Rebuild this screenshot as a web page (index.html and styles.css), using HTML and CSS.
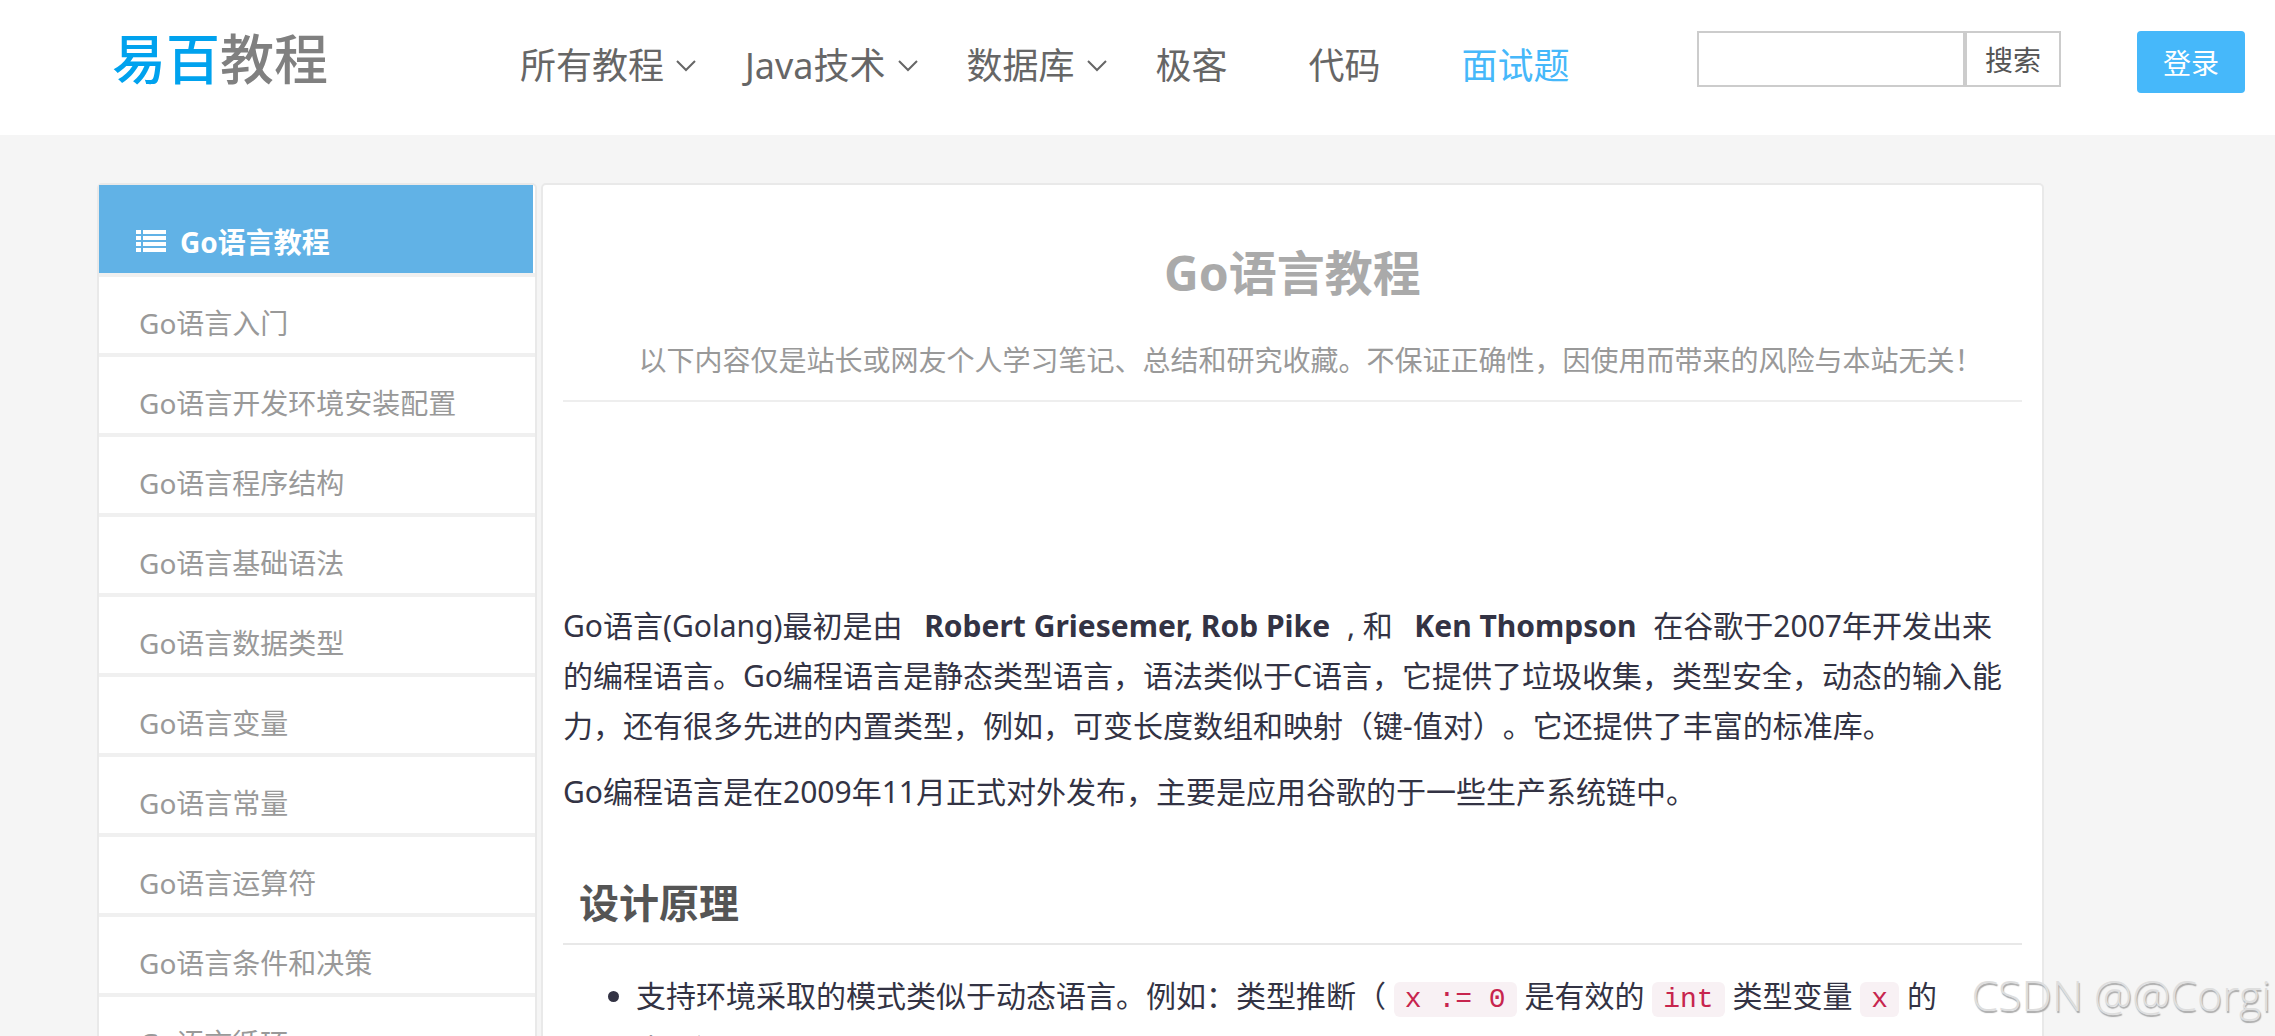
FILE: index.html
```html
<!DOCTYPE html>
<html lang="zh-CN">
<head>
<meta charset="utf-8">
<meta name="viewport" content="width=device-width, initial-scale=1">
<title>Go语言教程 - 易百教程</title>
<link rel="stylesheet" href="styles.css">
</head>
<body>
<header class="header">
  <a class="logo" href="#"><span class="logo-accent">易百</span>教程</a>
  <nav class="nav">
    <a class="nav-link nav-menu" href="#">所有教程<svg class="caret" viewBox="0 0 20 12" aria-hidden="true"><path d="M1 1l9 9 9-9"/></svg></a>
    <a class="nav-link nav-menu" href="#">Java技术<svg class="caret" viewBox="0 0 20 12" aria-hidden="true"><path d="M1 1l9 9 9-9"/></svg></a>
    <a class="nav-link nav-menu" href="#">数据库<svg class="caret" viewBox="0 0 20 12" aria-hidden="true"><path d="M1 1l9 9 9-9"/></svg></a>
    <a class="nav-link" href="#">极客</a>
    <a class="nav-link" href="#">代码</a>
    <a class="nav-link nav-active" href="#">面试题</a>
  </nav>
  <form class="search">
    <input class="search-input" type="text" aria-label="搜索">
    <button class="search-button" type="button">搜索</button>
  </form>
  <button class="login" type="button">登录</button>
</header>
<div class="layout">
  <aside class="sidebar">
    <h2 class="sidebar-title"><svg class="list-icon" viewBox="0 0 30 22" aria-hidden="true"><path d="M0 0h5v4H0zM7 0h23v4H7zM0 6h5v4H0zM7 6h23v4H7zM0 12h5v4H0zM7 12h23v4H7zM0 18h5v4H0zM7 18h23v4H7z"/></svg>Go语言教程</h2>
    <ul class="chapters">
      <li><a href="#">Go语言入门</a></li>
      <li><a href="#">Go语言开发环境安装配置</a></li>
      <li><a href="#">Go语言程序结构</a></li>
      <li><a href="#">Go语言基础语法</a></li>
      <li><a href="#">Go语言数据类型</a></li>
      <li><a href="#">Go语言变量</a></li>
      <li><a href="#">Go语言常量</a></li>
      <li><a href="#">Go语言运算符</a></li>
      <li><a href="#">Go语言条件和决策</a></li>
      <li><a href="#">Go语言循环</a></li>
    </ul>
  </aside>
  <main class="article">
    <h1 class="article-title">Go语言教程</h1>
    <p class="notice">以下内容仅是站长或网友个人学习笔记、总结和研究收藏。不保证正确性，因使用而带来的风险与本站无关！</p>
    <div class="content">
      <p>Go语言(Golang)最初是由&nbsp; <strong>Robert Griesemer, Rob Pike</strong> , 和&nbsp; <strong>Ken Thompson</strong> 在谷歌于2007年开发出来<br>的编程语言。Go编程语言是静态类型语言，语法类似于C语言，它提供了垃圾收集，类型安全，动态的输入能力，还有很多先进的内置类型，例如，可变长度数组和映射（键-值对）。它还提供了丰富的标准库。</p>
      <p>Go编程语言是在2009年11月正式对外发布，主要是应用谷歌的于一些生产系统链中。</p>
      <h2>设计原理</h2>
      <ul>
        <li>支持环境采取的模式类似于动态语言。例如：类型推断（ <code>x := 0</code> 是有效的 <code>int</code> 类型变量 <code>x</code> 的<span class="keep">声明）</span></li>
      </ul>
    </div>
  </main>
</div>
<div class="watermark">CSDN @@Corgi</div>
</body>
</html>
```

FILE: styles.css
```css
* { box-sizing: border-box; }

body {
  margin: 0;
  height: 100vh;
  overflow: hidden;
  position: relative;
  background: #f5f5f5;
  color: #333344;
  font-family: "Noto Sans", "Noto Sans CJK SC", sans-serif;
  font-size: 28px;
  text-spacing-trim: space-all;
}

a { color: inherit; text-decoration: none; }
h1, h2, p, ul { margin: 0; padding: 0; }

.header {
  display: flex;
  align-items: flex-start;
  height: 135px;
  padding: 0 30px 0 112px;
  background: #fff;
}

.logo {
  padding-top: 20px;
  color: #808080;
  font-size: 54px;
  font-weight: 500;
  line-height: 78px;
  white-space: nowrap;
}
.logo-accent { color: #00a2ee; }

.nav {
  display: flex;
  margin-left: 192px;
  padding-top: 40px;
  color: #666;
  font-size: 36px;
  line-height: 52px;
  white-space: nowrap;
}
.nav-link { margin-right: 81px; }
.nav-menu { margin-right: 49px; }
.nav-active { margin-right: 0; color: #46b8fa; }
.caret {
  width: 20px;
  height: 12px;
  margin-left: 12px;
  vertical-align: 7px;
  fill: none;
  stroke: #666;
  stroke-width: 2;
}

.search {
  display: flex;
  margin: 31px 76px 0 auto;
}
.search-input {
  width: 268px;
  height: 56px;
  padding: 0 12px;
  border: 2px solid #ccc;
  background: #fff;
  font: inherit;
}
.search-button {
  height: 56px;
  padding: 0 18px;
  border: 2px solid #ccc;
  background: #fff;
  color: #555;
  font: inherit;
}
.login {
  margin-top: 31px;
  height: 62px;
  padding: 0 26px;
  border: 0;
  border-radius: 4px;
  background: #46b8fa;
  color: #fff;
  font: inherit;
}

.layout {
  display: grid;
  grid-template-columns: 440px minmax(0, 1fr);
  gap: 4px;
  padding: 48px 231px 0 97px;
}
.sidebar, .article {
  border: 2px solid #e9e9e9;
  border-radius: 5px;
  background: #fff;
}
.sidebar-title {
  display: flex;
  align-items: center;
  height: 88px;
  margin-right: 2px;
  padding: 24px 0 0 37px;
  background: #61b2e6;
  color: #fff;
  font-size: 28px;
}
.list-icon {
  width: 30px;
  height: 22px;
  margin-right: 14px;
  fill: #fff;
}
.chapters {
  border-top: 4px solid #f0f0f0;
  list-style: none;
}
.chapters a {
  display: block;
  height: 80px;
  padding: 26px 40px 0;
  border-bottom: 4px solid #f0f0f0;
  color: #999;
  line-height: 40px;
}

.article { padding: 50px 20px 40px; }
.article-title {
  color: #aaa;
  font-size: 48px;
  line-height: 76px;
  text-align: center;
}
.notice {
  padding: 28px 0 18px;
  margin-bottom: 199px;
  border-bottom: 2px solid #eee;
  color: #999;
  line-height: 43px;
  text-align: center;
  text-indent: 36px;
}
.content {
  font-size: 30px;
  line-height: 50px;
}
.content p { margin-bottom: 16px; }
.content strong { padding: 0 9px 0 6px; }
.content h2 {
  margin: 56px 0 26px;
  padding: 0 16px 10px;
  border-bottom: 2px solid #e8e8e8;
  color: #555;
  font-size: 40px;
  line-height: 60px;
}
.content ul { padding-left: 73px; }
.content code {
  padding: 2px 11px;
  border-radius: 6px;
  background: #f8f1f4;
  color: #c7254e;
  font-family: "Liberation Mono", monospace;
  font-size: 28px;
}
.keep { white-space: nowrap; }

.watermark {
  position: absolute;
  right: 4px;
  bottom: 11px;
  color: #dedede;
  font-family: "Open Sans", sans-serif;
  font-size: 43px;
  font-weight: 300;
  line-height: 60px;
  text-shadow: 1px 2px 1px #aaa;
}
```
